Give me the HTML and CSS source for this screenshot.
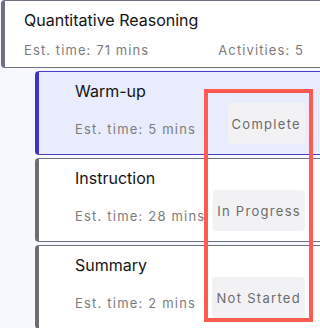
FILE: index.html
```html
<!DOCTYPE html>
<html>
<head>
<meta charset="utf-8">
<link rel="stylesheet" href="styles.css">
</head>
<body>
<div class="page">
  <div class="course">
    <div class="course-title">Quantitative Reasoning</div>
    <div class="course-meta">
      <span>Est. time: 71 mins</span>
      <span>Activities: 5</span>
    </div>
  </div>
  <div class="list">
    <div class="item active">
      <div class="item-main">
        <div class="item-title">Warm-up</div>
        <div class="item-meta">Est. time: 5 mins</div>
      </div>
      <div class="badge">Complete</div>
    </div>
    <div class="item">
      <div class="item-main">
        <div class="item-title">Instruction</div>
        <div class="item-meta">Est. time: 28 mins</div>
      </div>
      <div class="badge">In Progress</div>
    </div>
    <div class="item">
      <div class="item-main">
        <div class="item-title">Summary</div>
        <div class="item-meta">Est. time: 2 mins</div>
      </div>
      <div class="badge">Not Started</div>
    </div>
  </div>
  <div class="highlight"></div>
</div>
</body>
</html>
```
FILE: styles.css
```css
* {
  box-sizing: border-box;
}
html, body {
  margin: 0;
  padding: 0;
  overflow: hidden;
  background: #f7f8fd;
  font-family: Inter, "Noto Sans", sans-serif;
}
.page {
  position: relative;
  width: 320px;
  height: 328px;
}
.course {
  margin-left: 1px;
  width: 321px;
  background: #fff;
  border: 1px solid #6f6f85;
  border-left: 4px solid #6f6f85;
  border-radius: 4px 0 0 4px;
  padding: 10px 17px 9px 19px;
}
.course-title {
  font-size: 16px;
  line-height: 19px;
  color: #141414;
}
.course-meta {
  display: flex;
  justify-content: space-between;
  margin-top: 12px;
  font-size: 13px;
  line-height: 16px;
  letter-spacing: 1.1px;
  color: #7c7c7c;
}
.list {
  margin-top: 3px;
  margin-left: 35px;
  width: 287px;
  display: flex;
  flex-direction: column;
  gap: 3px;
}
.item {
  display: flex;
  justify-content: space-between;
  align-items: flex-end;
  background: #fff;
  border: 1px solid #6f6f85;
  border-left: 4px solid #6e6e6e;
  border-radius: 4px 0 0 4px;
  padding: 10px 16px 10px 36px;
}
.item.active {
  background: #e8ecfc;
  border-color: #4a3cc6;
  border-left-color: #4332c0;
}
.item-main {
  display: flex;
  flex-direction: column;
  align-self: stretch;
  justify-content: space-between;
}
.item-title {
  font-size: 16px;
  line-height: 19px;
  color: #141414;
}
.item-meta {
  font-size: 13px;
  line-height: 16px;
  letter-spacing: 1.2px;
  color: #7c7c7c;
  padding-bottom: 7px;
  margin-top: 20px;
  white-space: nowrap;
}
.badge {
  background: #f2f2f5;
  border-radius: 4px;
  padding: 13px 4px 12px 4px;
  font-size: 13px;
  line-height: 16px;
  letter-spacing: 1.3px;
  color: #6b6b6b;
  white-space: nowrap;
}
.highlight {
  position: absolute;
  left: 204px;
  top: 89px;
  width: 109px;
  height: 233px;
  border: 4px solid #ff5b50;
}
```
